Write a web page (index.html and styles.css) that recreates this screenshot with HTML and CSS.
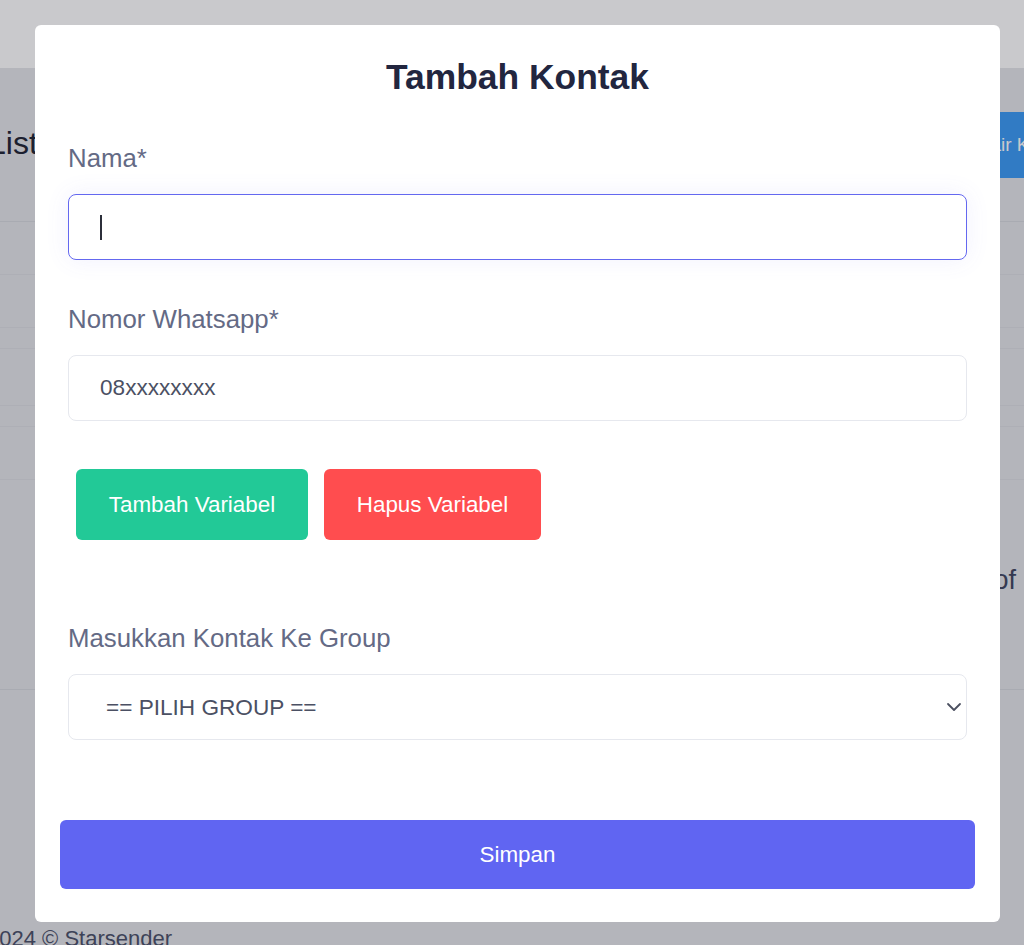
FILE: index.html
```html
<!DOCTYPE html>
<html lang="id">
<head>
    <meta charset="UTF-8">
    <meta name="viewport" content="width=device-width, initial-scale=1.0">
    <title>Tambah Kontak</title>
    <link rel="stylesheet" href="styles.css">
</head>
<body>
    <div class="page">
        <div class="topbar"></div>
        <div class="toolbar">
            <h2 class="page-title">List</h2>
            <button class="btn-blue">Pair Kontak</button>
        </div>
        <div class="table">
            <div class="row head"></div>
            <div class="row"></div>
            <div class="row short"></div>
            <div class="row mid"></div>
            <div class="row short"></div>
            <div class="row"></div>
            <div class="pager">1 to 3 of</div>
        </div>
        <div class="footer">2024 &copy; Starsender</div>
    </div>

    <div class="backdrop"></div>

    <div class="modal">
        <h2 class="modal-title">Tambah Kontak</h2>

        <div class="field first">
            <label for="nama">Nama*</label>
            <div class="input-wrap">
                <input type="text" id="nama" class="input focused">
                <span class="caret"></span>
            </div>
        </div>

        <div class="field">
            <label for="nomor">Nomor Whatsapp*</label>
            <input type="text" id="nomor" class="input" placeholder="08xxxxxxxx">
        </div>

        <div class="actions">
            <button class="btn btn-green">Tambah Variabel</button>
            <button class="btn btn-red">Hapus Variabel</button>
        </div>

        <div class="field group">
            <label for="group">Masukkan Kontak Ke Group</label>
            <div class="input-wrap">
                <select id="group" class="input select">
                    <option>== PILIH GROUP ==</option>
                </select>
                <svg class="chevron" width="16" height="10" viewBox="0 0 16 10">
                    <path d="M2 2 L8 8 L14 2" fill="none" stroke="#4b5060" stroke-width="1.8" stroke-linecap="round" stroke-linejoin="round"/>
                </svg>
            </div>
        </div>

        <button class="btn-submit">Simpan</button>
    </div>
</body>
</html>
```

FILE: styles.css
```css
html, body {
    margin: 0;
    height: 100%;
    overflow: hidden;
}
body {
    font-family: "Liberation Sans", Arial, sans-serif;
    background-color: #e4e5e9;
}

/* page behind the modal */
.page {
    width: 1024px;
}
.topbar {
    height: 68px;
    background: #fff;
}
.toolbar {
    height: 153px;
    display: flex;
    align-items: center;
    justify-content: space-between;
    border-bottom: 1px solid #d6d8de;
}
.page-title {
    margin: 0 0 2px -12px;
    font-size: 32px;
    font-weight: normal;
    color: #1f2433;
}
.btn-blue {
    flex-shrink: 0;
    height: 66px;
    margin-right: -72px;
    padding: 0 20px;
    border: none;
    background: #3a9af5;
    color: #fff;
    font-family: inherit;
    font-size: 19px;
}
.table {
    height: 467px;
    border-bottom: 1px solid #d6d8de;
}
.row {
    height: 52px;
    border-bottom: 1px solid #dcdee3;
}
.row.short {
    height: 20px;
}
.row.mid {
    height: 56px;
}
.row:last-of-type {
    height: 84px;
}
.pager {
    padding-top: 85px;
    line-height: 30px;
    text-align: right;
    padding-right: 8px;
    font-size: 27px;
    color: #3f4660;
}
.footer {
    margin-top: 236px;
    margin-left: -13px;
    font-size: 22px;
    color: #4a5068;
}

.backdrop {
    position: fixed;
    inset: 0;
    background: rgba(20, 22, 35, 0.23);
}

/* modal */
.modal {
    position: fixed;
    left: 35px;
    top: 25px;
    width: 965px;
    box-sizing: border-box;
    padding: 31px 33px 33px;
    background: #fff;
    border-radius: 6px;
}
.modal-title {
    margin: 0;
    font-size: 35.4px;
    line-height: 42px;
    font-weight: bold;
    text-align: center;
    color: #22263f;
}
.field {
    margin-top: 44px;
}
.field.first {
    margin-top: 45px;
}
.field.group {
    margin-top: 83px;
}
label {
    display: block;
    font-size: 25.8px;
    line-height: 30px;
    color: #646a85;
    margin-bottom: 21px;
}
.input-wrap {
    position: relative;
}
.input {
    display: block;
    width: 100%;
    height: 66px;
    box-sizing: border-box;
    padding: 0 31px;
    border: 1px solid #e6e8ee;
    border-radius: 8px;
    background: #fff;
    font-family: inherit;
    font-size: 22.6px;
    color: #4b5063;
    outline: none;
}
.input::placeholder {
    color: #4b5063;
}
.input.focused {
    border: 1.5px solid #6468f0;
    box-shadow: 0 0 24px rgba(99, 102, 241, 0.09);
}
.caret {
    position: absolute;
    left: 32px;
    top: 21px;
    width: 1.5px;
    height: 25px;
    background: #2c2f3a;
}
.select {
    appearance: none;
    -webkit-appearance: none;
    padding-left: 37px;
}
.chevron {
    position: absolute;
    right: 5px;
    top: 28px;
}
.actions {
    display: flex;
    gap: 16px;
    margin-top: 48px;
    padding-left: 8px;
}
.btn {
    height: 71px;
    padding: 0;
    border: none;
    border-radius: 6px;
    color: #fff;
    font-family: inherit;
    font-size: 22.4px;
}
.btn-green {
    width: 232px;
    background: #22c997;
}
.btn-red {
    width: 217px;
    background: #ff4d4f;
}
.btn-submit {
    display: block;
    width: calc(100% + 16px);
    height: 69px;
    margin: 80px -8px 0;
    border: none;
    border-radius: 6px;
    background: #6065f2;
    color: #fff;
    font-family: inherit;
    font-size: 22.4px;
}
```
